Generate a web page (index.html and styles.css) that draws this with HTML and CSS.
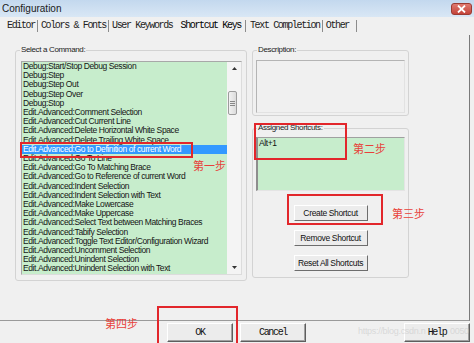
FILE: index.html
```html
<!DOCTYPE html>
<html lang="en">
<head>
    <meta charset="UTF-8">
    <meta name="viewport" content="width=device-width, initial-scale=1.0">
    <title>Configuration</title>
    <link rel="stylesheet" href="styles.css">
</head>
<body>
    <div class="window">
        <!-- Заголовок окна -->
        <div class="titlebar">
            <span class="title">Configuration</span>
            <span class="close">
                <svg width="9" height="8" viewBox="0 0 9 8"><path d="M1 0.5 L8 7.5 M8 0.5 L1 7.5" stroke="#fff" stroke-width="1.8"/></svg>
            </span>
        </div>

        <!-- Вкладки -->
        <div class="tabs">
            <span class="tab tab-first">Editor</span>
            <span class="tab">Colors &amp; Fonts</span>
            <span class="tab tab-plain">User Keywords</span>
            <span class="tab tab-active">Shortcut Keys</span>
            <span class="tab">Text Completion</span>
            <span class="tab">Other </span>
        </div>

        <div class="panel">
            <!-- Список команд -->
            <div class="group group-commands">
                <div class="group-title">Select a Command:</div>
                <div class="listbox">
                    <ul class="items">
                        <li>Debug:Start/Stop Debug Session</li>
                        <li>Debug:Step</li>
                        <li>Debug:Step Out</li>
                        <li>Debug:Step Over</li>
                        <li>Debug:Stop</li>
                        <li>Edit.Advanced:Comment Selection</li>
                        <li>Edit.Advanced:Cut Current Line</li>
                        <li>Edit.Advanced:Delete Horizontal White Space</li>
                        <li>Edit.Advanced:Delete Trailing White Space</li>
                        <li class="selected">Edit.Advanced:Go to Definition of current Word</li>
                        <li>Edit.Advanced:Go To Line</li>
                        <li>Edit.Advanced:Go To Matching Brace</li>
                        <li>Edit.Advanced:Go to Reference of current Word</li>
                        <li>Edit.Advanced:Indent Selection</li>
                        <li>Edit.Advanced:Indent Selection with Text</li>
                        <li>Edit.Advanced:Make Lowercase</li>
                        <li>Edit.Advanced:Make Uppercase</li>
                        <li>Edit.Advanced:Select Text between Matching Braces</li>
                        <li>Edit.Advanced:Tabify Selection</li>
                        <li>Edit.Advanced:Toggle Text Editor/Configuration Wizard</li>
                        <li>Edit.Advanced:Uncomment Selection</li>
                        <li>Edit.Advanced:Unindent Selection</li>
                        <li>Edit.Advanced:Unindent Selection with Text</li>
                    </ul>
                    <div class="scrollbar">
                        <div class="sb-arrow">
                            <svg width="5" height="3" viewBox="0 0 5 3"><path d="M0 3 L2.5 0 L5 3 Z" fill="#333"/></svg>
                        </div>
                        <div class="sb-track">
                            <div class="sb-thumb"><span></span><span></span><span></span></div>
                        </div>
                        <div class="sb-arrow">
                            <svg width="5" height="3" viewBox="0 0 5 3"><path d="M0 0 L2.5 3 L5 0 Z" fill="#333"/></svg>
                        </div>
                    </div>
                </div>
            </div>

            <div class="side">
                <!-- Описание -->
                <div class="group group-desc">
                    <div class="group-title">Description:</div>
                    <div class="desc-box"></div>
                </div>

                <!-- Назначенные сочетания -->
                <div class="group group-assigned">
                    <div class="group-title">Assigned Shortcuts:</div>
                    <div class="shortcut-box">Alt+1</div>
                    <button class="btn">Create Shortcut</button>
                    <button class="btn">Remove Shortcut</button>
                    <button class="btn">Reset All Shortcuts</button>
                </div>
            </div>
        </div>

        <div class="actions">
            <button class="btn-dialog">OK</button>
            <button class="btn-dialog">Cancel</button>
            <button class="btn-dialog btn-help">Help</button>
        </div>

        <!-- Пометки поверх скриншота -->
        <div class="mark mark-1"></div>
        <div class="mark mark-2"></div>
        <div class="mark mark-3"></div>
        <div class="mark mark-4"></div>
        <span class="step step-1">第一步</span>
        <span class="step step-2">第二步</span>
        <span class="step step-3">第三步</span>
        <span class="step step-4">第四步</span>
        <span class="watermark wm-left">https://blog.csdn.n</span>
        <span class="watermark wm-right">0050</span>
    </div>
</body>
</html>
```

FILE: styles.css
```css
/* Окно настроек */
body {
    margin: 0;
    background-color: #f0f0f0;
    font-family: "Liberation Sans", Arial, sans-serif;
    color: #111;
}

.window {
    position: relative;
    width: 474px;
    height: 343px;
    overflow: hidden;
    background-color: #f0f0f0;
}

.titlebar {
    height: 17px;
    display: flex;
    align-items: center;
    justify-content: space-between;
    padding: 0 2px;
    background: linear-gradient(#c3d8ee, #d9e7f5);
}

.title {
    font-size: 10px;
    color: #1a1a1a;
}

.close {
    width: 21px;
    height: 12px;
    box-sizing: border-box;
    display: flex;
    align-items: center;
    justify-content: center;
    background: linear-gradient(#e07a70, #c4443a);
    border: 1px solid #9a3b33;
    border-radius: 3px;
}

/* Вкладки */
.tabs {
    height: 18px;
    display: flex;
    align-items: center;
    padding-left: 7px;
    font-family: "Liberation Mono", "Courier New", monospace;
    font-size: 10px;
    letter-spacing: -1.35px;
    color: #222;
}

.tab {
    line-height: 12px;
    padding-right: 2px;
    margin-right: 3px;
    border-right: 1px solid #8c8c8c;
    white-space: pre;
}

.tab-plain {
    border-right: none;
    margin-right: 6px;
}

.tab-active {
    padding-right: 4px;
    margin-right: 4px;
    color: #000;
}

/* Панель вкладки */
.panel {
    height: 270px;
    width: 454px;
    display: flex;
    gap: 5px;
    padding: 15px 0 0 15px;
    border-right: 1px solid #7a7a7a;
    border-bottom: 1px solid #9a9a9a;
}

.group {
    box-sizing: border-box;
    border: 1px solid #d3d3d3;
    border-radius: 3px;
}

.group-title {
    width: max-content;
    height: 10px;
    line-height: 10px;
    margin: -6px 0 0 1px;
    padding: 0 1px;
    background-color: #f0f0f0;
    font-size: 8px;
    letter-spacing: -0.35px;
    color: #222;
}

.group-commands {
    width: 232px;
    height: 231px;
    padding: 0 4px 0 5px;
}

.group-commands .group-title {
    margin-left: -1px;
}

.listbox {
    margin-top: 6px;
    height: 214px;
    box-sizing: border-box;
    display: flex;
    border: 1px solid;
    border-color: #a8a8a8 #dcdcdc #dcdcdc #a8a8a8;
    background-color: #c7edcc;
}

.items {
    flex: 1;
    list-style: none;
    margin: 0;
    padding: 0;
    overflow: hidden;
    font-size: 8.5px;
    letter-spacing: -0.4px;
    line-height: 9.2px;
    color: #151515;
}

.items li {
    padding-left: 1px;
    white-space: nowrap;
}

.items li.selected {
    background-color: #3399ff;
    color: #fff;
}

/* Полоса прокрутки */
.scrollbar {
    width: 14px;
    display: flex;
    flex-direction: column;
    background-color: #f4f4f4;
}

.sb-arrow {
    height: 13px;
    display: flex;
    align-items: center;
    justify-content: center;
}

.sb-track {
    flex: 1;
}

.sb-thumb {
    width: 9px;
    height: 24px;
    margin: 16px 0 0 1px;
    box-sizing: border-box;
    border: 1px solid #9c9c9c;
    border-radius: 2px;
    background: linear-gradient(90deg, #f2f2f2, #dcdcdc);
    display: flex;
    flex-direction: column;
    align-items: center;
    justify-content: center;
    gap: 1px;
}

.sb-thumb span {
    width: 5px;
    height: 1px;
    background-color: #888;
}

/* Правая колонка */
.side {
    width: 157px;
}

.group-desc {
    height: 66px;
    padding: 0 3px;
}

.desc-box {
    margin-top: 5px;
    height: 53px;
    box-sizing: border-box;
    border: 1px solid;
    border-color: #b4b4b4 #e2e2e2 #e2e2e2 #b4b4b4;
    background-color: #f0f0f0;
}

.group-assigned {
    height: 150px;
    margin-top: 12px;
    padding: 0 3px;
    display: flex;
    flex-direction: column;
}

.shortcut-box {
    margin-top: 4px;
    height: 54px;
    box-sizing: border-box;
    padding: 1px 0 0 1px;
    border: 1px solid;
    border-left-width: 2px;
    border-color: #a0a0a0 #e4e4e4 #e4e4e4 #8e8e8e;
    background-color: #c7edcc;
    font-size: 8.5px;
    letter-spacing: -0.4px;
    line-height: 9px;
}

.btn {
    align-self: center;
    width: 74px;
    height: 16px;
    margin-top: 9px;
    padding: 0;
    box-sizing: border-box;
    border: 1px solid;
    border-color: #fff #6d6d6d #6d6d6d #fff;
    background-color: #ececec;
    font-family: "Liberation Sans", Arial, sans-serif;
    font-size: 8.5px;
    letter-spacing: -0.35px;
    color: #111;
}

.shortcut-box + .btn {
    margin-top: 14px;
}

/* Кнопки диалога */
.actions {
    display: flex;
    gap: 7px;
    padding: 2px 4px 0 167px;
}

.btn-dialog {
    width: 66px;
    height: 19px;
    padding: 0;
    border: 1px solid;
    border-color: #fff #5e5e5e #5e5e5e #fff;
    box-shadow: inset -1px -1px #a0a0a0;
    background-color: #ececec;
    font-family: "Liberation Mono", "Courier New", monospace;
    font-size: 10px;
    letter-spacing: -1.35px;
    color: #111;
}

.btn-help {
    margin-left: auto;
}

/* Красные пометки */
.mark {
    position: absolute;
    box-sizing: border-box;
    border: 2px solid #e2262b;
}

.mark-1 { left: 20px; top: 142px; width: 173px; height: 16px; }
.mark-2 { left: 254px; top: 123px; width: 93px; height: 37px; }
.mark-3 { left: 287px; top: 194px; width: 96px; height: 31px; }
.mark-4 { left: 157px; top: 306px; width: 81px; height: 40px; }

.step {
    position: absolute;
    font-family: "Noto Sans CJK SC", sans-serif;
    font-size: 11px;
    line-height: 12px;
    color: #e8403a;
}

.step-1 { left: 193px; top: 159px; }
.step-2 { left: 353px; top: 142px; }
.step-3 { left: 392px; top: 207px; }
.step-4 { left: 105px; top: 317px; }

.watermark {
    position: absolute;
    top: 326px;
    font-size: 9px;
    letter-spacing: -0.3px;
    color: rgba(200, 200, 200, 0.6);
}

.wm-left { left: 358px; }
.wm-right { left: 450px; }
```
